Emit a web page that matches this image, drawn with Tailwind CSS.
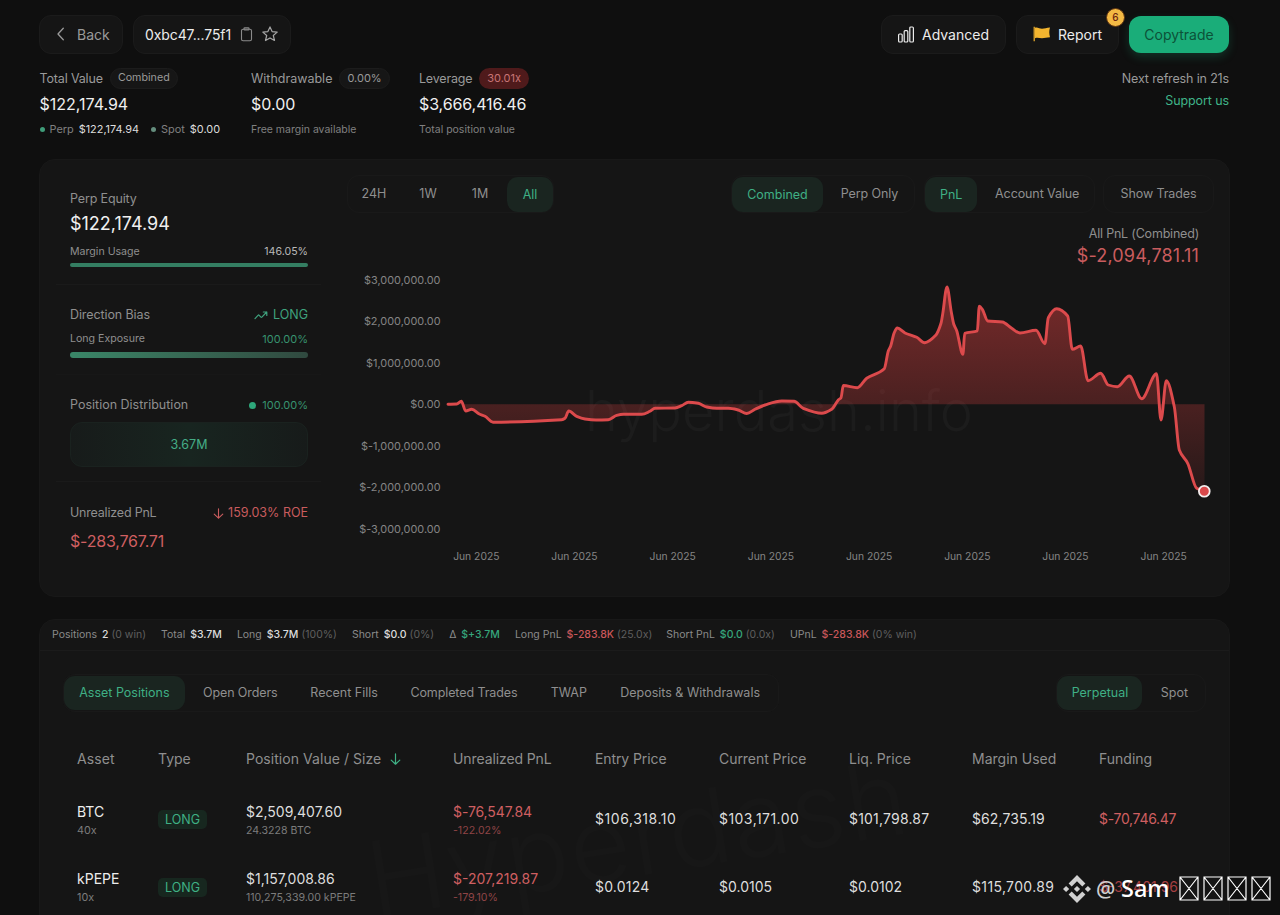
<!DOCTYPE html>
<html lang="en">
<head>
    <title>Trader</title>
    <meta charset="utf-8"/>
    <meta name="viewport" content="width=device-width, initial-scale=1">
    <script src="https://cdn.jsdelivr.net/npm/@tailwindcss/browser@4"></script>
</head>
<body class="relative h-[915px] w-[1280px] overflow-hidden bg-[#0f0f0f] font-['Inter','Liberation_Sans',sans-serif] text-[#9a9a9a]">
<div class="ml-[39px] w-[1191px]">
    <header class="flex h-[69px] items-start justify-between pt-[15px] pr-px">
        <div class="flex gap-[10px]">
            <button class="flex h-[39px] w-[84px] items-center gap-[8px] rounded-xl border border-[#1b1b1b] bg-[#151515] pb-px pl-[13px] text-[14px]">
                <svg class="size-4" viewBox="0 0 16 16" fill="none" stroke="currentColor" stroke-width="1.3" stroke-linecap="round" stroke-linejoin="round"><path d="M10.3 2.2 5 8l5.3 5.8"/></svg>
                Back
            </button>
            <div class="flex h-[39px] w-[158px] items-center rounded-xl border border-[#1b1b1b] bg-[#151515] pb-px pl-[11px] text-[14px] text-[#ececec]">
                <span class="w-[95px] tracking-[-0.1px]">0xbc47...75f1</span>
                <svg class="h-[15px] w-[13px] text-[#8a8a8a]" viewBox="0 0 13 15" fill="none" stroke="currentColor" stroke-width="1.1" stroke-linejoin="round"><rect x="1.5" y="2.2" width="10" height="11.6" rx="1.6"/><path d="M4 2.2V1.6q0-.7.7-.7h3.6q.7 0 .7.7v.6q0 .8-.7.8H4.7Q4 3 4 2.2z"/></svg>
                <svg class="ml-[9px] size-4 text-[#a5a5a5]" viewBox="0 0 16 16" fill="none" stroke="currentColor" stroke-width="1.2" stroke-linejoin="round"><path d="m8 .9 2.1 4.7 5.1.5-3.9 3.4 1.2 5L8 11.9l-4.5 2.6 1.2-5L.8 6.1l5.1-.5z"/></svg>
            </div>
        </div>
        <div class="flex gap-[10px]">
            <button class="flex h-[39px] w-[125px] items-center gap-[8px] rounded-xl border border-[#1b1b1b] bg-[#151515] pb-px pl-[16px] text-[14px] text-[#ececec]">
                <svg class="h-[17px] w-4" viewBox="0 0 16 17" fill="none" stroke="currentColor" stroke-width="1.2"><rect x=".6" y="8" width="3.6" height="8" rx="1"/><rect x="6.2" y="4.6" width="3.6" height="11.4" rx="1"/><rect x="11.8" y="1" width="3.6" height="15" rx="1"/></svg>
                Advanced
            </button>
            <button class="relative flex h-[39px] w-[103px] items-center gap-[7px] rounded-xl border border-[#1b1b1b] bg-[#151515] pb-px pl-[16px] text-[14px] text-[#ececec]">
                <svg class="h-[16px] w-[18px]" viewBox="0 0 18 16" fill="#f3b52f"><path d="M.6.8h1.2v14.4H.6zM2 1.8c2.4-1 4.400 1 7 1s4.600-1 8-1.200c-1 3.500-1 6 0 9.600-3 .2-5.400 1-8 1s-4.600-1.200-7 0z"/></svg>
                Report
                <span class="absolute -top-[8px] left-[89px] flex size-[19px] items-center justify-center rounded-full border border-[#5c3312] bg-[#f3b944] text-[10px] font-medium text-[#6b2510]">6</span>
            </button>
            <button class="mt-px h-[37px] w-[100px] rounded-xl bg-[#1aad79] pb-px text-[14px] text-[#0c5238] shadow-[0_4px_10px_#1aad7938]">Copytrade</button>
        </div>
    </header>

    <section class="flex h-[90px] justify-between pl-[0.5px] text-[12.5px]">
        <div class="flex">
            <div class="w-[211.5px]">
                <div class="flex h-[20px] items-center gap-[7px]"><span class="tracking-[-0.15px]">Total Value</span> <span class="mb-[2px] flex h-[21px] items-center rounded-full border border-[#1c1c1c] bg-[#161616] px-[7px] text-[10.7px]">Combined</span></div>
                <div class="mt-px text-[16px]/[28px] text-[#f0f0f0]">$122,174.94</div>
                <div class="flex items-center gap-[5px] text-[10.9px]/[22px] text-[#808080]">
                    <i class="size-[5px] rounded-full bg-[#3f9c79]"></i>Perp <span class="text-[#dedede]">$122,174.94</span>
                    <i class="ml-[7px] size-[5px] rounded-full bg-[#648d7d]"></i>Spot <span class="text-[#dedede]">$0.00</span>
                </div>
            </div>
            <div class="w-[168px]">
                <div class="flex h-[20px] items-center gap-[7px]">Withdrawable <span class="mb-[2px] flex h-[21px] items-center rounded-full border border-[#1c1c1c] bg-[#161616] px-[7px] text-[11px]">0.00%</span></div>
                <div class="mt-px text-[16px]/[28px] text-[#f0f0f0]">$0.00</div>
                <div class="pt-px text-[10.5px]/[22px] text-[#808080]">Free margin available</div>
            </div>
            <div>
                <div class="flex h-[20px] items-center gap-[7px]"><span class="tracking-[-0.2px]">Leverage</span> <span class="mb-[2px] flex h-[21px] items-center rounded-full bg-[#4f1a1b] px-[8px] text-[11px] text-[#c87475]">30.01x</span></div>
                <div class="mt-px text-[16px]/[28px] tracking-[-0.1px] text-[#f0f0f0]">$3,666,416.46</div>
                <div class="pt-px text-[10.5px]/[22px] text-[#808080]">Total position value</div>
            </div>
        </div>
        <div class="pr-px text-right">
            <div class="leading-[19px] tracking-[-0.15px]">Next refresh in 21s</div>
            <div class="mt-[3px] leading-[19px] tracking-[-0.1px] text-[#3fb489]">Support us</div>
        </div>
    </section>

    <section class="flex h-[438px] rounded-2xl border border-[#181818] bg-[#151515]">
        <aside class="w-[281px] pl-[16px] text-[12.5px] text-[#8f8f8f]">
            <div class="h-[125px] border-b border-[#1a1a1a] pt-[29px] pr-[13px] pl-[14px]">
                <div class="leading-[20px] tracking-[-0.15px]">Perp Equity</div>
                <div class="mt-px text-[18px]/[28px] text-[#f0f0f0]">$122,174.94</div>
                <div class="mt-[5px] flex justify-between text-[10.6px]/[18px]"><span>Margin Usage</span><span class="text-[#b9b9b9]">146.05%</span></div>
                <div class="mt-[2px] h-[4px] rounded-full bg-[#347e62]"></div>
            </div>
            <div class="h-[90px] border-b border-[#171717] pt-[20px] pr-[13px] pl-[14px]">
                <div class="flex justify-between leading-[20px]">
                    <span class="tracking-[-0.1px]">Direction Bias</span>
                    <span class="flex items-center gap-[5px] text-[#3fa27e]">
                        <svg class="h-[9px] w-[14px]" viewBox="0 0 14 9" fill="none" stroke="currentColor" stroke-width="1.2" stroke-linecap="round" stroke-linejoin="round"><path d="m1 7.600 3-3.300q.6-.6 1.200 0l1.700 1.800q.5.500 1 0L12.700 1M9.300 1h3.500v3.500"/></svg>
                        LONG
                    </span>
                </div>
                <div class="mt-[4px] flex justify-between text-[10.6px]/[20px]"><span>Long Exposure</span><span class="text-[11px] text-[#379370]">100.00%</span></div>
                <div class="mt-[3px] h-[6px] rounded-full bg-linear-to-r from-[#3a8768] to-[#30493f]"></div>
            </div>
            <div class="h-[107px] border-b border-[#1a1a1a] pt-[20px] pr-[13px] pl-[14px]">
                <div class="flex justify-between leading-[20px]">
                    <span>Position Distribution</span>
                    <span class="flex items-center gap-[6px] pb-px text-[11px] text-[#379370]"><i class="size-[7px] rounded-full bg-[#2ea87b]"></i>100.00%</span>
                </div>
                <div class="mt-[6px] flex h-[45px] items-center justify-center rounded-xl border border-[#1a221f] bg-linear-to-r from-[#171b1a] via-[#182520] to-[#171b1a] pt-px text-[12.5px] text-[#45ad86]">3.67M</div>
            </div>
            <div class="pt-[21px] pr-[13px] pl-[14px]">
                <div class="flex justify-between leading-[20px]">
                    <span class="tracking-[-0.2px]">Unrealized PnL</span>
                    <span class="flex items-center gap-[4px] text-[#c95c5e]">
                        <svg class="h-[11px] w-[11px]" viewBox="0 0 11 11" fill="none" stroke="currentColor" stroke-width="1.100" stroke-linecap="round" stroke-linejoin="round"><path d="M5.500.8v9.400M1.200 6.100l4.300 4.100 4.300-4.100"/></svg>
                        159.03% ROE
                    </span>
                </div>
                <div class="mt-[5px] text-[16px]/[26px] tracking-[-0.2px] text-[#cf5f61]">$-283,767.71</div>
            </div>
        </aside>

        <div class="w-[908px] pt-[15px] text-[12.5px] text-[#8f8f8f]">
            <div class="flex h-[38px] items-center">
                <div class="ml-[26px] flex h-[38px] w-[207px] items-center rounded-xl border border-[#191919]">
                    <span class="w-[52px] text-center">24H</span>
                    <span class="w-[56px] text-center">1W</span>
                    <span class="w-[48px] text-center">1M</span>
                    <span class="ml-[3px] w-[46px] rounded-[11px] bg-[#1a2520] text-center leading-[35px] text-[#3fb085]">All</span>
                </div>
                <div class="ml-[177px] flex h-[38px] w-[184px] items-center rounded-xl border border-[#191919]">
                    <span class="w-[92px] rounded-[11px] bg-[#1a2520] text-center leading-[35px] text-[#3fb085]">Combined</span>
                    <span class="w-[92px] pl-[2px] text-center tracking-[-0.1px]">Perp Only</span>
                </div>
                <div class="ml-[9px] flex h-[38px] w-[171px] items-center rounded-xl border border-[#191919]">
                    <span class="w-[53px] rounded-[11px] bg-[#1a2520] text-center leading-[35px] text-[#3fb085]">PnL</span>
                    <span class="w-[118px] pl-[3px] text-center tracking-[-0.1px]">Account Value</span>
                </div>
                <div class="ml-[8px] flex h-[38px] w-[111px] items-center justify-center rounded-xl border border-[#191919] tracking-[-0.1px]">Show Trades</div>
            </div>
            <div class="mt-[11px] pr-[30px] text-right">
                <div class="leading-[20px] tracking-[-0.2px]">All PnL (Combined)</div>
                <div class="text-[18px]/[24px] tracking-[0.15px] text-[#c95c5e]">$-2,094,781.11</div>
            </div>
            <!-- viewBox is in page pixels -->
            <svg class="ml-[24px] mt-[2px] h-[300px] w-[870px]" viewBox="345 270 870 300">
                <defs>
                    <linearGradient id="area" gradientUnits="userSpaceOnUse" x1="0" y1="287" x2="0" y2="492">
                        <stop offset="0" stop-color="#ef4444" stop-opacity=".46"/>
                        <stop offset="1" stop-color="#ef4444" stop-opacity=".08"/>
                    </linearGradient>
                </defs>
                <text x="585" y="431" font-size="56" font-weight="300" fill="#fff" fill-opacity=".03" textLength="388">hyperdash.info</text>
                <g id="y-axis" font-size="10.9" fill="#858585" text-anchor="end"></g>
                <g id="x-axis" font-size="10.3" fill="#858585" text-anchor="middle"></g>
                <path id="fill" fill="url(#area)"/>
                <path id="line" fill="none" stroke="#dc4a4c" stroke-width="2.900" stroke-linejoin="round" stroke-linecap="round"/>
                <circle cx="1204.300" cy="491.300" r="5.400" fill="#d9484a" stroke="#f4eded" stroke-width="1.800"/>
            </svg>
        </div>
    </section>

    <section class="relative mt-[22px] h-[320px] overflow-hidden rounded-2xl border border-[#181818] bg-[#151515]">
        <div class="absolute top-[182px] left-[328px] origin-left -rotate-[9deg] text-[104px] font-light tracking-[2px] text-white/[0.008]">Hyperdash</div>
        <div class="flex h-[31px] items-center gap-[15px] border-b border-[#1b1b1b] pl-[12px] text-[10.5px] whitespace-nowrap text-[#5f5f5f]">
            <span><span class="text-[#8a8a8a]">Positions</span> <b class="ml-[2px] font-medium text-[#dcdcdc]">2</b> (0 win)</span>
            <span><span class="text-[#8a8a8a]">Total</span> <b class="ml-[2px] font-medium text-[#dcdcdc]">$3.7M</b></span>
            <span><span class="text-[#8a8a8a]">Long</span> <b class="ml-[2px] font-medium text-[#dcdcdc]">$3.7M</b> (100%)</span>
            <span><span class="text-[#8a8a8a]">Short</span> <b class="ml-[2px] font-medium text-[#dcdcdc]">$0.0</b> (0%)</span>
            <span><span class="text-[#8a8a8a]">Δ</span> <b class="ml-[2px] font-medium text-[#35a67c]">$+3.7M</b></span>
            <span><span class="text-[#8a8a8a]">Long PnL</span> <b class="ml-[2px] font-medium text-[#c9575a]">$-283.8K</b> (25.0x)</span>
            <span class="-ml-px"><span class="text-[#8a8a8a]">Short PnL</span> <b class="ml-[2px] font-medium text-[#35a67c]">$0.0</b> (0.0x)</span>
            <span><span class="text-[#8a8a8a]">UPnL</span> <b class="ml-[2px] font-medium text-[#c9575a]">$-283.8K</b> (0% win)</span>
        </div>
        <div class="mt-[23px] flex items-center justify-between pr-[23px] pl-[23px] text-[12.5px] text-[#8f8f8f]">
            <div class="flex h-[38px] w-[716px] items-center rounded-xl border border-[#191919]">
                <span class="w-[121px] rounded-[11px] bg-[#1a2520] text-center leading-[34px] text-[#3fb085]">Asset Positions</span>
                <span class="w-[111px] text-center tracking-[-0.1px]">Open Orders</span>
                <span class="w-[97px] text-center">Recent Fills</span>
                <span class="w-[143px] text-center tracking-[-0.1px]">Completed Trades</span>
                <span class="w-[67px] text-center">TWAP</span>
                <span class="w-[176px] text-center">Deposits &amp; Withdrawals</span>
            </div>
            <div class="flex h-[38px] w-[150px] items-center rounded-xl border border-[#191919]">
                <span class="w-[86px] rounded-[11px] bg-[#1a2520] pl-px text-center leading-[34px] text-[#3fb085]">Perpetual</span>
                <span class="w-[64px] pl-[2px] text-center">Spot</span>
            </div>
        </div>
        <div class="grid grid-cols-[81px_88px_207px_142px_124px_130px_123px_127px_100px] pl-[37px] text-[14px] whitespace-nowrap text-[#dedede]">
            <div class="col-span-9 grid h-[59px] grid-cols-subgrid items-end pb-[2px] text-[#8f8f8f]">
                <span class="tracking-[0.1px]">Asset</span>
                <span>Type</span>
                <span class="flex items-center gap-[9px] tracking-[0.050px]">Position Value / Size <svg class="h-[12px] w-[11px] text-[#3fb085]" viewBox="0 0 11 12" fill="none" stroke="currentColor" stroke-width="1.200" stroke-linecap="round" stroke-linejoin="round"><path d="M5.500.8v10.400M1.200 7.100l4.300 4.100 4.300-4.100"/></svg></span>
                <span class="tracking-[-0.1px]">Unrealized PnL</span>
                <span class="tracking-[-0.1px]">Entry Price</span>
                <span class="tracking-[-0.050px]">Current Price</span>
                <span>Liq. Price</span>
                <span>Margin Used</span>
                <span>Funding</span>
            </div>
            <div class="col-span-9 mt-[14px] grid h-[67.5px] grid-cols-subgrid items-center">
                <div class="pt-[3px] text-[#ececec]"><p class="leading-[20px]">BTC</p><p class="text-[10.8px]/[17px] text-[#7c7c7c]">40x</p></div>
                <div><span class="inline-block w-[49px] rounded-[5px] bg-[#17271f] text-center text-[12.5px]/[19px] text-[#3fb085]">LONG</span></div>
                <div class="pt-[3px]"><p class="leading-[20px]">$2,509,407.60</p><p class="text-[10.6px]/[17px] text-[#7c7c7c]">24.3228 BTC</p></div>
                <div class="pt-[3px] text-[#cf5f61]"><p class="leading-[20px] tracking-[-0.1px]">$-76,547.84</p><p class="text-[10.6px]/[17px] text-[#8f4446]">-122.02%</p></div>
                <span class="tracking-[0.550px]">$106,318.10</span>
                <span class="tracking-[0.450px]">$103,171.00</span>
                <span class="tracking-[0.2px]">$101,798.87</span>
                <span class="tracking-[0.1px]">$62,735.19</span>
                <span class="tracking-[-0.3px] text-[#cf5f61]">$-70,746.47</span>
            </div>
            <div class="col-span-9 grid h-[67.5px] grid-cols-subgrid items-center">
                <div class="pt-[3px] text-[#ececec]"><p class="leading-[20px]">kPEPE</p><p class="text-[10.8px]/[17px] text-[#7c7c7c]">10x</p></div>
                <div><span class="inline-block w-[49px] rounded-[5px] bg-[#17271f] text-center text-[12.5px]/[19px] text-[#3fb085]">LONG</span></div>
                <div class="pt-[3px]"><p class="leading-[20px]">$1,157,008.86</p><p class="text-[10.6px]/[17px] text-[#7c7c7c]">110,275,339.00 kPEPE</p></div>
                <div class="pt-[3px] text-[#cf5f61]"><p class="leading-[20px]">$-207,219.87</p><p class="text-[10.6px]/[17px] text-[#8f4446]">-179.10%</p></div>
                <span class="tracking-[0.2px]">$0.0124</span>
                <span>$0.0105</span>
                <span>$0.0102</span>
                <span class="tracking-[0.350px]">$115,700.89</span>
                <span class="text-[#a53f41]">$-37,401.96</span>
            </div>
        </div>
    </section>
</div>

<!-- author stamp -->
<div class="absolute top-[872px] left-[1063px] flex h-[34px] items-center font-['Noto_Sans',sans-serif] text-[23.5px] text-white">
    <svg class="size-[28px] text-[#d0d0d0]" viewBox="0 0 28 28" fill="currentColor"><path d="m14 0 8.400 8.400-3.100 3.100L14 6.200l-5.300 5.300-3.100-3.100zM3.100 10.900 6.200 14l-3.100 3.100L0 14zm10.900 0 3.100 3.100-3.100 3.100-3.100-3.100zm10.900 0L28 14l-3.100 3.100-3.100-3.100zM8.700 16.500l5.300 5.300 5.300-5.300 3.100 3.100L14 28l-8.400-8.400z"/></svg>
    <span class="ml-[5px] w-[25px] text-[21.5px] font-medium text-[#cfcfcf]">@</span>
    <span class="w-[58px] font-medium">Sam</span>
    <svg class="h-[26px] w-[93px]" viewBox="0 0 93 26" fill="none" stroke="currentColor" stroke-width="1.200"><path d="M1 1h18v23H1zl18 23M19 1 1 24M25 1h18v23H25zl18 23M43 1 25 24M49 1h18v23H49zl18 23M67 1 49 24M73 1h18v23H73zl18 23M91 1 73 24"/></svg>
</div>

<script>
    const points = [
        [448, 404.3], [456.7, 404], [461.3, 401.3], [465.7, 411], [471.7, 409.3], [479.3, 414], [485, 416.3], [493, 422.2],
        [561.7, 419.7], [565, 418.3], [568.7, 411], [576.7, 416.3], [585, 419], [596, 420], [608.3, 419.7], [616.7, 415.3],
        [623.3, 414.3], [641.7, 414.3], [650, 411.3], [655, 408.3], [675, 408], [681.7, 405.7], [688.3, 402.3], [698.3, 403.3],
        [706.7, 407], [716.7, 408.3], [728.3, 408.3], [738.3, 410], [746.7, 413.5], [755, 409.3], [765, 405], [781.7, 401],
        [794, 401.3], [803.3, 408.3], [821.7, 413.3], [831.7, 409.3], [838.3, 400], [841, 397.7], [843.3, 385.5], [857.3, 387.7],
        [866.7, 378.3], [884.3, 368.7], [888.3, 351], [890.7, 346], [894, 333.3], [897.3, 328], [905, 333], [916.7, 337.3],
        [924.7, 342.7], [935.7, 335.3], [941, 323.3], [942.7, 314], [947, 287], [951.3, 312], [953.7, 324], [956.7, 330.7],
        [962.9, 354.3], [964.7, 333.3], [977.3, 331], [979.3, 306.3], [982.3, 309.3], [987.7, 321], [1002.3, 322], [1011.7, 328.3],
        [1020, 333], [1036, 330.3], [1044.9, 343.7], [1048.3, 317.7], [1056.7, 308.7], [1067.7, 316], [1072.3, 349.3], [1080.7, 346],
        [1088, 380.7], [1100.7, 373.3], [1108.3, 385], [1117.3, 386.7], [1129.3, 376], [1141.7, 398.7], [1156.5, 373.7], [1161, 420],
        [1166.3, 380.7], [1174.3, 406.7], [1179.3, 450], [1187.7, 463.3], [1196.7, 488.3], [1204.5, 491]
    ]
    const slopes = points.slice(1).map((p, i) => (p[1] - points[i][1]) / (p[0] - points[i][0]))
    // flat at peaks, harmonic mean elsewhere
    const tangents = points.map((p, i) => {
        const a = slopes[i - 1], b = slopes[i]
        if (a === undefined || b === undefined) return a ?? b
        return a * b <= 0 ? 0 : 2 * a * b / (a + b)
    })
    let d = `M${points[0]}`
    for (let i = 1; i < points.length; i++) {
        const [x0, y0] = points[i - 1], [x1, y1] = points[i], h = (x1 - x0) / 3
        d += `C${x0 + h},${y0 + h * tangents[i - 1]} ${x1 - h},${y1 - h * tangents[i]} ${x1},${y1}`
    }
    document.getElementById('line').setAttribute('d', d)
    document.getElementById('fill').setAttribute('d', d + 'V404.3H448Z')

    const label = (parent, x, y, text) => {
        const el = document.createElementNS('http://www.w3.org/2000/svg', 'text')
        el.setAttribute('x', x)
        el.setAttribute('y', y)
        el.textContent = text
        document.getElementById(parent).appendChild(el)
    }
    const ticks = ['$3,000,000.00', '$2,000,000.00', '$1,000,000.00', '$0.00', '$-1,000,000.00', '$-2,000,000.00', '$-3,000,000.00']
    ticks.forEach((t, i) => label('y-axis', 440.5, 283.8 + i * 41.45, t))
    for (let i = 0; i < 8; i++) label('x-axis', 476.3 + i * 98.2, 560, 'Jun 2025')
</script>
</body>
</html>
